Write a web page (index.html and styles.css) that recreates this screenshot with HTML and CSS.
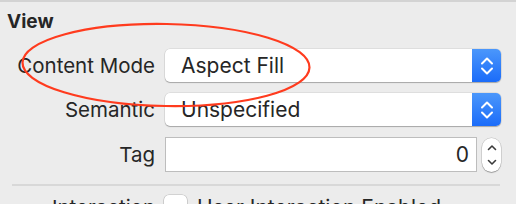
FILE: index.html
```html
<!DOCTYPE html>
<html lang="en">
<head>
    <meta charset="UTF-8">
    <meta name="viewport" content="width=device-width, initial-scale=1.0">
    <title>Inspector - View</title>
    <link rel="stylesheet" href="styles.css">
</head>
<body>
    <div class="topbar"></div>
    <div class="section">
        <h2 class="section-title">View</h2>
        <div class="form">
            <label class="field-label">Content Mode</label>
            <div class="popup">
                <span class="popup-value">Aspect Fill</span>
                <span class="popup-arrows">
                    <svg width="14" height="20" viewBox="0 0 14 20"><path d="M2 7.5 L7 2.5 L12 7.5 M2 12.5 L7 17.5 L12 12.5" fill="none" stroke="#fff" stroke-width="2" stroke-linecap="round" stroke-linejoin="round"/></svg>
                </span>
            </div>

            <label class="field-label">Semantic</label>
            <div class="popup">
                <span class="popup-value">Unspecified</span>
                <span class="popup-arrows">
                    <svg width="14" height="20" viewBox="0 0 14 20"><path d="M2 7.5 L7 2.5 L12 7.5 M2 12.5 L7 17.5 L12 12.5" fill="none" stroke="#fff" stroke-width="2" stroke-linecap="round" stroke-linejoin="round"/></svg>
                </span>
            </div>

            <label class="field-label">Tag</label>
            <div class="tag-row">
                <div class="textfield">0</div>
                <div class="stepper">
                    <svg width="10" height="28" viewBox="0 0 10 28"><path d="M1.5 8.5 L5 5 L8.5 8.5 M1.5 19.5 L5 23 L8.5 19.5" fill="none" stroke="#3a3a3a" stroke-width="1.6" stroke-linecap="round" stroke-linejoin="round"/></svg>
                </div>
            </div>
        </div>
        <div class="separator"></div>
        <div class="form check-row">
            <label class="field-label">Interaction</label>
            <div class="check">
                <span class="checkbox"></span>
                <span class="check-text">User Interaction Enabled</span>
            </div>
        </div>
    </div>
    <svg class="markup" width="516" height="204" viewBox="0 0 516 204">
        <ellipse cx="166" cy="65" rx="143.5" ry="41" transform="rotate(1 166 65)" fill="none" stroke="#ff3b1e" stroke-width="2.2"/>
    </svg>
</body>
</html>
```

FILE: styles.css
```css
body { margin: 0; background: #ececec; font-family: Inter, "Liberation Sans", Arial, sans-serif; color: #262626; overflow: hidden; height: 204px; position: relative; }
.topbar { height: 2px; background: #d3d3d3; }
.section { padding: 0 15px 0 7px; }
.section-title { margin: 0; padding-top: 9px; height: 47px; box-sizing: border-box; font-size: 19px; line-height: 22px; font-weight: 700; color: #262626; }
.form { display: grid; grid-template-columns: 148px 336px; column-gap: 10px; row-gap: 11px; align-items: center; }
.field-label { font-size: 20.5px; text-align: right; white-space: nowrap; }
.popup { height: 33px; display: flex; align-items: stretch; background: #fff; border-radius: 5px; box-shadow: 0 0 0 0.5px rgba(0,0,0,0.12), 0 1px 1px rgba(0,0,0,0.25); overflow: hidden; }
.popup-value { flex: 1; font-size: 21px; line-height: 33px; padding-left: 16px; }
.popup-arrows { width: 29px; display: flex; align-items: center; justify-content: center; background: linear-gradient(to bottom, #4b97fb, #1b6cf9); }
.tag-row { display: flex; align-items: center; gap: 5px; }
.textfield { flex: 1; height: 35px; box-sizing: border-box; background: #fff; border: 1px solid #bdbdbd; font-size: 21px; line-height: 33px; text-align: right; padding-right: 7px; }
.stepper { width: 19px; height: 34px; box-sizing: border-box; background: #fff; border-radius: 10px; box-shadow: 0 0 0 0.5px rgba(0,0,0,0.2), 0 1px 1px rgba(0,0,0,0.25); display: flex; align-items: center; justify-content: center; }
.separator { height: 2px; background: #d8d8d8; margin: 12px 0 0 5px; width: 488px; }
.check-row { margin-top: 9px; align-items: start; }
.check { display: flex; align-items: flex-start; gap: 10px; }
.checkbox { width: 23px; height: 23px; margin-left: -1px; box-sizing: border-box; background: #fff; border-radius: 5px; box-shadow: 0 0 0 0.5px rgba(0,0,0,0.22), 0 1px 1px rgba(0,0,0,0.25); flex: none; }
.check-text { font-size: 21px; line-height: 26px; white-space: nowrap; }
.check-row .field-label { line-height: 26px; }
.markup { position: absolute; top: 0; left: 0; pointer-events: none; }
```
